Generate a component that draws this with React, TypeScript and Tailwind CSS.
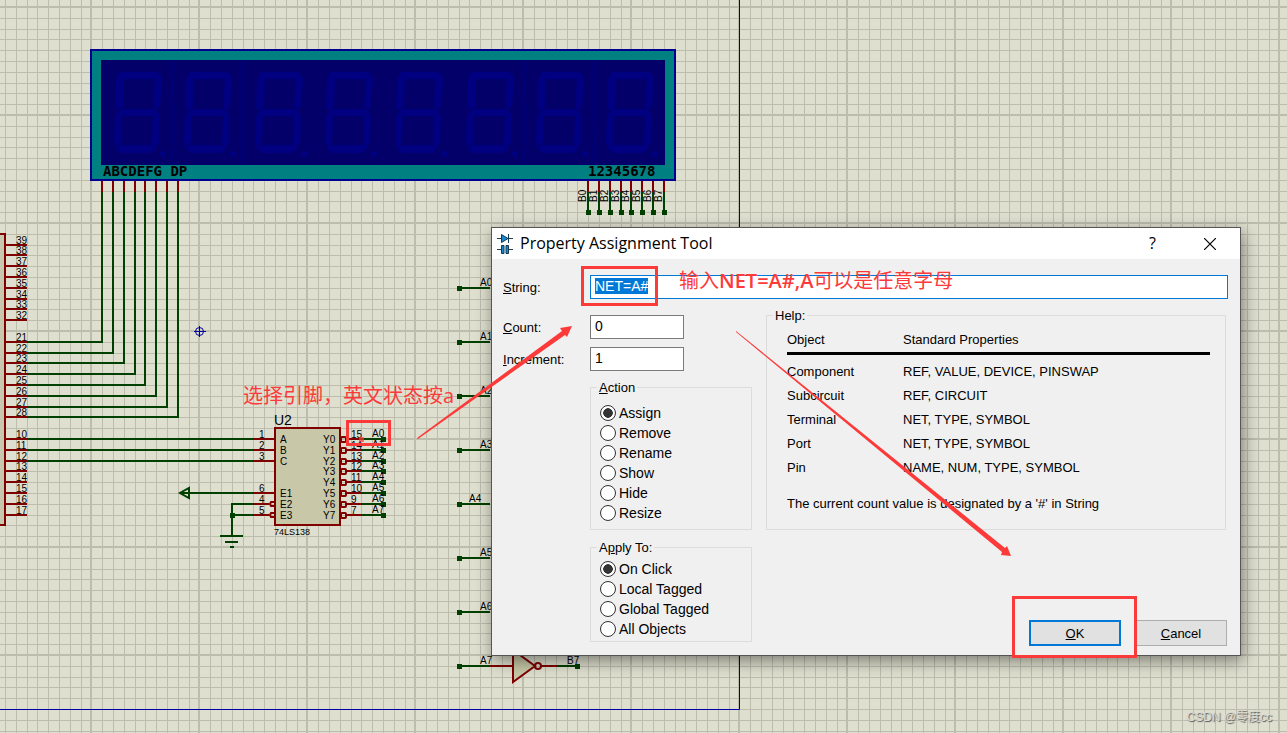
import { useEffect, useRef, useState } from 'react';
import type { ReactNode } from 'react';

const MINOR_X = [11, 22, 33, 44, 54, 65, 76, 87, 98];
const MINOR_Y = [11, 22, 32, 43, 54, 65, 76, 86, 97];

const SEGMENT_PINS = [102, 113, 124, 135, 145, 156, 167, 178];
const DIGIT_PINS = [588, 599, 610, 621, 631, 642, 653, 664];
const BUS_ROWS = [342, 353, 363, 374, 385, 396, 407, 417];

const MCU_PINS = [
  { label: '39', y: 245 },
  { label: '38', y: 255 },
  { label: '37', y: 266 },
  { label: '36', y: 277 },
  { label: '35', y: 288 },
  { label: '34', y: 299 },
  { label: '33', y: 309 },
  { label: '32', y: 320 },
  { label: '21', y: 342 },
  { label: '22', y: 353 },
  { label: '23', y: 363 },
  { label: '24', y: 374 },
  { label: '25', y: 385 },
  { label: '26', y: 396 },
  { label: '27', y: 407 },
  { label: '28', y: 417 },
  { label: '10', y: 439 },
  { label: '11', y: 450 },
  { label: '12', y: 461 },
  { label: '13', y: 471 },
  { label: '14', y: 482 },
  { label: '15', y: 493 },
  { label: '16', y: 504 },
  { label: '17', y: 515 },
];

const DECODER_INPUTS = [
  { pin: '1', name: 'A', y: 439 },
  { pin: '2', name: 'B', y: 450 },
  { pin: '3', name: 'C', y: 461 },
  { pin: '6', name: 'E1', y: 493 },
  { pin: '4', name: 'E2', y: 504, inverted: true },
  { pin: '5', name: 'E3', y: 515, inverted: true },
];

const DECODER_OUTPUTS = [
  { pin: '15', y: 439 },
  { pin: '14', y: 450 },
  { pin: '13', y: 461 },
  { pin: '12', y: 471 },
  { pin: '11', y: 482 },
  { pin: '10', y: 493 },
  { pin: '9', y: 504 },
  { pin: '7', y: 515 },
];

const DRIVER_INPUTS = [
  { label: 'A0', x: 480, y: 288 },
  { label: 'A1', x: 480, y: 342 },
  { label: 'A2', x: 480, y: 396 },
  { label: 'A3', x: 480, y: 450 },
  { label: 'A4', x: 469, y: 504 },
  { label: 'A5', x: 480, y: 558 },
  { label: 'A6', x: 480, y: 612 },
  { label: 'A7', x: 480, y: 666 },
];

const SEGMENTS = [
  '120,72 157,72 161,76 157,79 121,79 118,75',
  '118,75 124,79 123,106 119,111 115,108 116,80',
  '155,79 161,75 162,80 160,106 157,110 153,106',
  '118,112 122,109 155,109 158,112 154,116 120,116',
  '118,112 122,116 121,142 117,148 114,142 115,116',
  '158,112 160,117 159,142 155,148 152,143 153,117',
  '115,148 121,145 153,145 157,148 151,153 121,153',
];

const ACTIONS = ['Assign', 'Remove', 'Rename', 'Show', 'Hide', 'Resize'];
const TARGETS = ['On Click', 'Local Tagged', 'Global Tagged', 'All Objects'];

const HELP_ROWS = [
  ['Component', 'REF, VALUE, DEVICE, PINSWAP'],
  ['Subcircuit', 'REF, CIRCUIT'],
  ['Terminal', 'NET, TYPE, SYMBOL'],
  ['Port', 'NET, TYPE, SYMBOL'],
  ['Pin', 'NAME, NUM, TYPE, SYMBOL'],
];

function Node({ x, y }: { x: number; y: number }) {
  return <rect x={x - 2} y={y - 2} width="5" height="5" fill="#004000" />;
}

function DisplayModule() {
  return (
    <g>
      <rect x="91" y="50" width="584" height="130" fill="#008080" stroke="#000090" strokeWidth="2" />
      <rect x="101" y="60" width="564" height="105" fill="#04006a" />
      {Array.from({ length: 8 }, (_, i) => (
        <g key={i} transform={`translate(${Math.round(i * 70.3)} 0)`} fill="#000080">
          {SEGMENTS.map((points) => (
            <polygon key={points} points={points} />
          ))}
          <circle cx="163" cy="154" r="3" />
          {i < 7 ? <rect x="172" y="61" width="1" height="104" fill="#000078" /> : null}
        </g>
      ))}
      <g className="font-['DejaVu_Sans_Mono',monospace] text-[14px] font-bold" fill="#000000">
        <text x="103" y="176" xmlSpace="preserve">
          ABCDEFG DP
        </text>
        <text x="588" y="176">
          12345678
        </text>
      </g>
    </g>
  );
}

function Schematic() {
  return (
    <svg
      className="absolute inset-0 h-full w-full font-['Liberation_Sans',Arial,sans-serif] text-[10px]"
      aria-label="Schematic sheet"
    >
      <defs>
        <pattern id="grid" x="91" y="7" width="108" height="108" patternUnits="userSpaceOnUse">
          <rect width="108" height="108" fill="#dfdfcf" />
          <g fill="#bdbdae">
            {MINOR_X.map((x) => (
              <rect key={x} x={x} y="0" width="1" height="108" />
            ))}
            {MINOR_Y.map((y) => (
              <rect key={y} x="0" y={y} width="108" height="1" />
            ))}
            <rect x="0" y="0" width="1" height="108" />
            <rect x="107" y="0" width="1" height="108" />
            <rect x="0" y="0" width="108" height="1" />
            <rect x="0" y="107" width="108" height="1" />
          </g>
        </pattern>
      </defs>
      <rect width="100%" height="100%" fill="url(#grid)" />

      {/* sheet border */}
      <path d="M739.5 0V709.5H0" fill="none" stroke="#0000a0" />

      <DisplayModule />

      <g fill="none" stroke="#004000" strokeWidth="2">
        {SEGMENT_PINS.map((x, i) => (
          <path key={x} d={`M${x} 192V${BUS_ROWS[i]}H27`} />
        ))}
        {DIGIT_PINS.map((x) => (
          <path key={x} d={`M${x} 192V212`} />
        ))}
        {[439, 450, 461].map((y) => (
          <path key={y} d={`M27 ${y}H254`} />
        ))}
        {DECODER_OUTPUTS.map(({ y }) => (
          <path key={y} d={`M361 ${y}H384`} />
        ))}
        {DRIVER_INPUTS.map(({ y }) => (
          <path key={y} d={`M457 ${y}H490`} />
        ))}
        <path d="M190 493H254M189 488V498L180 493ZM254 504H232V536M254 515H232M220 536H243M225 542H238M230 547H234" />
        <path d="M181 493H190M557 666H577" />
      </g>

      <g fill="none" stroke="#800000" strokeWidth="2">
        {[...SEGMENT_PINS, ...DIGIT_PINS].map((x) => (
          <path key={x} d={`M${x} 181V192`} />
        ))}
        {MCU_PINS.map(({ y }) => (
          <path key={y} d={`M6 ${y}H27`} />
        ))}
        <rect x="-4" y="234" width="9" height="291" fill="#c8c8b0" />
        <rect x="275" y="428" width="65" height="97" fill="#c8c8a8" />
        {DECODER_INPUTS.map(({ y, inverted }) => (
          <g key={y}>
            <path d={`M253 ${y}H${inverted ? 269 : 275}`} />
            {inverted ? <path d={`M274 ${y - 2}H271L270 ${y}L271 ${y + 2}H274`} /> : null}
          </g>
        ))}
        {DECODER_OUTPUTS.map(({ y }) => (
          <g key={y}>
            <rect x="341" y={y - 2} width="5" height="5" rx="1" />
            <path d={`M347 ${y}H361`} />
          </g>
        ))}
        <path d="M490 666H513M541 666H557" />
        <path d="M513 650V682L535 666Z" fill="#c8c8a8" />
        <circle cx="538" cy="666" r="3" />
      </g>

      {DIGIT_PINS.map((x) => (
        <Node key={x} x={x} y={212} />
      ))}
      {DECODER_OUTPUTS.map(({ y }) => (
        <Node key={y} x={383} y={y} />
      ))}
      {DRIVER_INPUTS.map(({ y }) => (
        <Node key={y} x={459} y={y} />
      ))}
      <Node x={232} y={515} />
      <Node x={577} y={666} />

      {/* origin marker */}
      <g fill="none" stroke="#0000a0">
        <circle cx="199.5" cy="331.5" r="4" />
        <path d="M194 331.5H206M199.5 326V337" />
      </g>

      <g fill="#000000">
        {MCU_PINS.map(({ label, y }) => (
          <text key={label} x="16" y={y - 1}>
            {label}
          </text>
        ))}
        {DIGIT_PINS.map((x, i) => (
          <text key={x} transform={`translate(${x - 2} 202) rotate(-90)`}>
            B{i}
          </text>
        ))}
        {DECODER_INPUTS.map(({ pin, name, y }) => (
          <g key={name}>
            <text x="259" y={y - 1}>
              {pin}
            </text>
            <text x="280" y={y + 4}>
              {name}
            </text>
          </g>
        ))}
        {DECODER_OUTPUTS.map(({ pin, y }, i) => (
          <g key={pin}>
            <text x="351" y={y - 1}>
              {pin}
            </text>
            <text x="323" y={y + 4}>
              Y{i}
            </text>
            <text x="372" y={y - 2}>
              A{i}
            </text>
          </g>
        ))}
        {DRIVER_INPUTS.map(({ label, x, y }) => (
          <text key={label} x={x} y={y - 2}>
            {label}
          </text>
        ))}
        <text x="567" y="664">
          B7
        </text>
        <text x="274" y="425" className="text-[14px]">
          U2
        </text>
        <text x="274" y="535" className="text-[9px]">
          74LS138
        </text>
      </g>
    </svg>
  );
}

function ToolIcon() {
  return (
    <svg width="16" height="20" viewBox="0 0 16 20" fill="none" aria-hidden="true">
      <path d="M0 4.500H16M0 15.500H5M11 15.500H16" stroke="#2b3a44" />
      <path d="M4.500 .5V8.500L11 4.500Z" fill="#1787d0" stroke="#15384f" />
      <path d="M11.500 0V9" stroke="#15384f" />
      <path d="M4.500 11.500H7V19.500H4.500ZM9 11.500H11.500V19.500H9Z" fill="#1787d0" stroke="#15384f" />
    </svg>
  );
}

function RadioGroup({
  legend,
  name,
  options,
  className,
}: {
  legend: ReactNode;
  name: string;
  options: string[];
  className: string;
}) {
  const [selected, setSelected] = useState(options[0]);

  return (
    <fieldset className={`ml-[87px] border border-[#dcdcdc] pl-[9px] ${className}`}>
      <legend className="-ml-[3px] px-[2px] pt-px leading-[15px]">{legend}</legend>
      {options.map((option) => (
        <label key={option} className="flex h-5 items-center gap-[3px] text-[14px] leading-4">
          <input
            type="radio"
            name={name}
            checked={selected === option}
            onChange={() => setSelected(option)}
            className="h-4 w-4 appearance-none rounded-full border border-[#333333] bg-white bg-clip-padding checked:bg-[radial-gradient(circle,#333333_4.5px,transparent_5px)]"
          />
          {option}
        </label>
      ))}
    </fieldset>
  );
}

function PropertyDialog() {
  const stringRef = useRef<HTMLInputElement>(null);
  const [value, setValue] = useState('NET=A#');
  const [count, setCount] = useState('0');
  const [increment, setIncrement] = useState('1');

  useEffect(() => {
    stringRef.current?.focus();
    stringRef.current?.select();
  }, []);

  return (
    <section
      role="dialog"
      aria-labelledby="dialog-title"
      className="absolute top-[227px] left-[491px] w-[750px] border border-[#555555] bg-[#f0f0f0] font-['Liberation_Sans',Arial,sans-serif] text-[13px] text-black shadow-[2px_5px_16px_rgba(0,0,0,0.45)]"
    >
      <header className="flex h-[31px] items-center bg-white pl-[5px]">
        <ToolIcon />
        <h1
          id="dialog-title"
          className="ml-[7px] flex-1 pb-[2px] font-['Open_Sans','Noto_Sans',sans-serif] text-[16px] leading-5"
        >
          Property Assignment Tool
        </h1>
        <button
          type="button"
          aria-label="Help"
          className="h-full w-[53px] pb-[2px] font-['Open_Sans',sans-serif] text-[16px]"
        >
          ?
        </button>
        <button type="button" aria-label="Close" className="flex h-full w-[61px] items-center justify-center">
          <svg width="12" height="12" viewBox="0 0 12 12" stroke="#000000" strokeWidth="1.2">
            <path d="M0 0L12 12M12 0L0 12" />
          </svg>
        </button>
      </header>

      <form className="pt-4 pr-3 pb-[9px] pl-[11px]" onSubmit={(event) => event.preventDefault()}>
        <div className="flex items-center">
          <label htmlFor="string" className="w-[87px] pt-[2px]">
            <u>S</u>tring:
          </label>
          <input
            id="string"
            ref={stringRef}
            value={value}
            onChange={(event) => setValue(event.target.value)}
            className="h-6 flex-1 border border-[#0078d7] bg-white px-1 pb-[2px] text-[14px] outline-none selection:bg-[#0078d7] selection:text-white"
          />
        </div>

        <div className="mt-4 flex">
          <div className="w-[249px] pb-1">
            <div className="flex items-center">
              <label htmlFor="count" className="w-[87px] pt-[2px]">
                <u>C</u>ount:
              </label>
              <input
                id="count"
                value={count}
                onChange={(event) => setCount(event.target.value)}
                className="h-6 w-[94px] border border-[#7a7a7a] bg-white px-1 pb-[2px] text-[14px]"
              />
            </div>
            <div className="mt-2 flex items-center">
              <label htmlFor="increment" className="w-[87px] pt-[2px]">
                <u>I</u>ncrement:
              </label>
              <input
                id="increment"
                value={increment}
                onChange={(event) => setIncrement(event.target.value)}
                className="h-6 w-[94px] border border-[#7a7a7a] bg-white px-1 pb-[2px] text-[14px]"
              />
            </div>

            <RadioGroup
              name="action"
              options={ACTIONS}
              className="mt-2 pt-2 pb-[6px]"
              legend={
                <>
                  <u>A</u>ction
                </>
              }
            />
            <RadioGroup
              name="apply-to"
              options={TARGETS}
              className="mt-[9px] pt-1 pb-[2px]"
              legend={
                <>
                  A<u>p</u>ply To:
                </>
              }
            />
          </div>

          <div className="ml-[14px] flex flex-1 flex-col">
            <fieldset className="-mt-2 mr-[2px] border border-[#dcdcdc] pr-[15px] pb-[18px] pl-5">
              <legend className="-ml-[14px] px-[2px] pt-px leading-[15px]">Help:</legend>
              <table className="w-full border-separate border-spacing-0 text-left leading-[15px]">
                <thead>
                  <tr>
                    <th className="w-[116px] border-b-[3px] border-black pt-[9px] pb-[5px] font-normal">Object</th>
                    <th className="border-b-[3px] border-black pt-[9px] pb-[5px] font-normal">
                      Standard Properties
                    </th>
                  </tr>
                </thead>
                <tbody>
                  {HELP_ROWS.map(([object, properties]) => (
                    <tr key={object}>
                      <td className="pt-[9px]">{object}</td>
                      <td className="pt-[9px]">{properties}</td>
                    </tr>
                  ))}
                </tbody>
              </table>
              <p className="mt-[21px] leading-[15px]">The current count value is designated by a '#' in String</p>
            </fieldset>

            <div className="mt-auto mr-px flex justify-end gap-[14px]">
              <button type="submit" className="h-[26px] w-[92px] border-2 border-[#0078d7] bg-[#e1e1e1] pt-[2px]">
                <u>O</u>K
              </button>
              <button type="button" className="h-[26px] w-[92px] border border-[#adadad] bg-[#e1e1e1] pt-[2px]">
                <u>C</u>ancel
              </button>
            </div>
          </div>
        </div>
      </form>
    </section>
  );
}

function Annotations() {
  return (
    <div className="pointer-events-none absolute inset-0 font-['Open_Sans','Noto_Sans_CJK_SC',sans-serif] text-[20px] leading-7 whitespace-nowrap text-[#fd3a3a]">
      <svg className="absolute inset-0 h-full w-full" aria-hidden="true">
        <g fill="none" stroke="#fd3a3a" strokeWidth="3">
          <rect x="582.500" y="267.500" width="74" height="37" />
          <rect x="347.500" y="421.500" width="42" height="23" />
          <rect x="1013.500" y="597.500" width="122" height="59" />
        </g>
        <g fill="#fd3a3a">
          <rect x="359" y="437" width="5" height="5" opacity="0.7" />
          <path d="M417 438L562 331L560 328L572 326L567 337L565 335L418 439Z" />
          <path d="M736 331L1005 548L1007 546L1011 556L1001 555L1002 552L736 332Z" />
        </g>
      </svg>
      <p className="absolute top-[382px] left-[243px]">
        选择引脚，英文状态按<span className="font-medium">a</span>
      </p>
      <p className="absolute top-[267px] left-[679px]">
        输入<span className="font-semibold">NET=A#,A</span>可以是任意字母
      </p>
    </div>
  );
}

export default function App() {
  return (
    <main className="relative min-h-screen overflow-hidden bg-[#dfdfcf]">
      <Schematic />
      <PropertyDialog />
      <Annotations />
      <p className="absolute right-[15px] bottom-2 font-['Liberation_Sans','Noto_Sans_CJK_SC',sans-serif] text-[12px] leading-4 text-[#dcdcd2] [text-shadow:1px_1px_1px_#555555]">
        CSDN @零度cc
      </p>
    </main>
  );
}
